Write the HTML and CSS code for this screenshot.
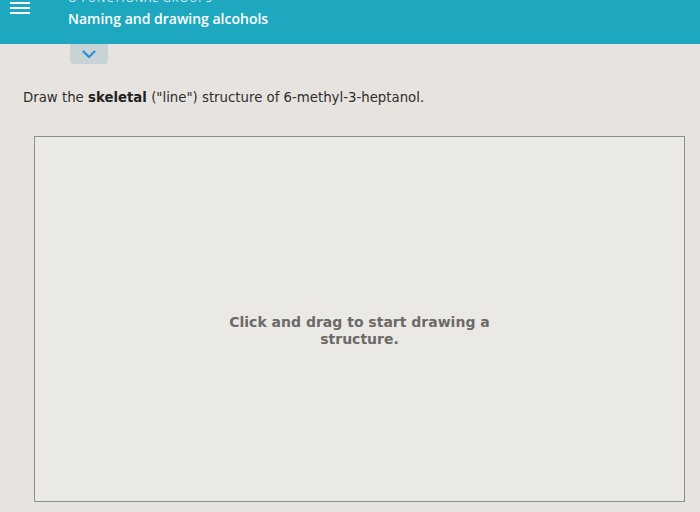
FILE: index.html
```html
<!DOCTYPE html>
<html lang="en">

<head>
    <meta charset="UTF-8">
    <title>Naming and drawing alcohols</title>
    <link rel="stylesheet" href="styles.css">
</head>

<body>
    <header class="topbar">
        <div class="menu-btn">
            <svg width="20" height="14" viewBox="0 0 20 14">
                <rect x="0" y="0" width="20" height="2" fill="#fff"/>
                <rect x="0" y="5" width="20" height="2" fill="#fff"/>
                <rect x="0" y="10" width="20" height="2" fill="#fff"/>
            </svg>
        </div>
        <div class="titles">
            <div class="topic">O FUNCTIONAL GROUPS</div>
            <div class="title">Naming and drawing alcohols</div>
        </div>
    </header>
    <div class="tab">
        <svg width="14" height="9" viewBox="0 0 14 9">
            <path d="M1.5 1.5 L7 7 L12.5 1.5" fill="none" stroke="#2f8fd0" stroke-width="2.2" stroke-linecap="round" stroke-linejoin="round"/>
        </svg>
    </div>
    <main class="question">
        <p class="prompt">Draw the <b>skeletal</b> ("line") structure of 6-methyl-3-heptanol.</p>
        <div class="canvas">
            <p class="hint">Click and drag to start drawing a<br>structure.</p>
        </div>
    </main>
</body>

</html>
```

FILE: styles.css
```css
body {
    margin: 0;
    background-color: #e7e4df;
    font-family: "DejaVu Sans", Verdana, sans-serif;
    color: #2b2b2b;
}

.topbar {
    display: flex;
    align-items: center;
    height: 44px;
    background-color: #1ea8c0;
    color: #fff;
    overflow: hidden;
}

.menu-btn {
    width: 68px;
    height: 44px;
    display: flex;
    padding: 2px 0 0 10px;
    box-sizing: border-box;
}

.titles {
    display: flex;
    flex-direction: column;
    align-self: flex-start;
}

.topic {
    font-family: "Open Sans", sans-serif;
    font-size: 11px;
    line-height: 12px;
    margin-top: -8px;
    color: #d9f1f5;
    letter-spacing: 1px;
}

.title {
    font-family: "Open Sans", sans-serif;
    font-weight: 600;
    font-size: 14px;
    line-height: 20px;
    margin-top: 5px;
}

.tab {
    margin-left: 70px;
    width: 38px;
    height: 20px;
    background-color: #c7d3d6;
    border-radius: 0 0 4px 4px;
    display: flex;
    justify-content: center;
    align-items: center;
}

.question {
    padding: 0 16px 0 23px;
}

.prompt {
    margin: 25px 0 0;
    font-size: 13.3px;
    line-height: 18px;
    color: #2e2e2e;
}

.prompt b {
    color: #222;
}

.canvas {
    margin: 29px 0 0 11px;
    width: 649px;
    height: 364px;
    border: 1px solid #8f8d8a;
    background-color: #ebe9e5;
    display: flex;
    justify-content: center;
    align-items: center;
}

.hint {
    margin: 24px 0 0;
    font-weight: bold;
    font-size: 14px;
    line-height: 17px;
    text-align: center;
    color: #6b6a68;
}
```
